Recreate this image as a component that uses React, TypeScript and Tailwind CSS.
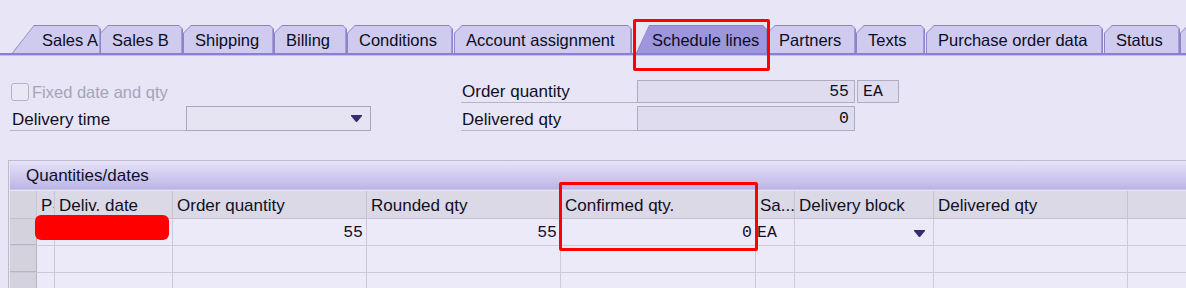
import React from "react";

type TabDef = { label: string; cls: string; kind: "first" | "normal" | "active" };

const tabs: TabDef[] = [
  { label: "Sales A", cls: "ml-[12px] w-[89px]", kind: "first" },
  { label: "Sales B", cls: "ml-[-1px] w-[83px]", kind: "normal" },
  { label: "Shipping", cls: "ml-[0px] w-[91px]", kind: "normal" },
  { label: "Billing", cls: "ml-[0px] w-[73px]", kind: "normal" },
  { label: "Conditions", cls: "ml-[0px] w-[106px]", kind: "normal" },
  { label: "Account assignment", cls: "ml-[1px] w-[178px]", kind: "normal" },
  { label: "Schedule lines", cls: "ml-[4px] w-[131px]", kind: "active" },
  { label: "Partners", cls: "ml-[0px] w-[89px]", kind: "normal" },
  { label: "Texts", cls: "ml-[0px] w-[69px]", kind: "normal" },
  { label: "Purchase order data", cls: "ml-[1px] w-[177px]", kind: "normal" },
  { label: "Status", cls: "ml-[1px] w-[76px]", kind: "normal" },
  { label: "", cls: "ml-[0px] w-[20px]", kind: "normal" },
];

function Tab({ t }: { t: TabDef }) {
  const outerClip =
    t.kind === "normal"
      ? "[clip-path:polygon(8px_0,calc(100%_-_4px)_0,100%_4px,100%_100%,0_100%,0_8px)]"
      : t.kind === "first"
      ? "[clip-path:polygon(22px_0,calc(100%_-_4px)_0,100%_4px,100%_100%,0_100%)]"
      : "[clip-path:polygon(13px_0,calc(100%_-_4px)_0,100%_4px,100%_100%,0_100%)]";
  const innerClip =
    t.kind === "normal"
      ? "[clip-path:polygon(7px_0,calc(100%_-_3px)_0,100%_3px,100%_100%,0_100%,0_7px)]"
      : t.kind === "first"
      ? "[clip-path:polygon(21px_0,calc(100%_-_3px)_0,100%_3px,100%_100%,0_100%)]"
      : "[clip-path:polygon(12px_0,calc(100%_-_3px)_0,100%_3px,100%_100%,0_100%)]";
  const bg = t.kind === "active" ? "bg-[#9d96dd]" : "bg-[#cfcbef]";
  const pad = t.kind === "first" ? "pl-[29px]" : t.kind === "active" ? "pl-[15px]" : "pl-[11px]";
  return (
    <div className={`${t.cls} h-[28px] shrink-0 bg-[#8c84c6] pt-[1px] pl-[1px] pr-[1px] ${outerClip}`}>
      <div
        className={`h-full ${bg} ${innerClip} ${pad} flex items-center pt-[1px] text-[16.5px] text-[#0c0c24] whitespace-nowrap border-r border-[#a29cd4]`}
      >
        {t.label}
      </div>
    </div>
  );
}

function DropArrow() {
  return (
    <svg width="11" height="7" viewBox="0 0 11 7">
      <polygon points="0,0 11,0 11,1 6,7 5,7 0,1" fill="#3a2a6e" />
    </svg>
  );
}

const cols = [
  { w: "w-[18px]", label: "P" },
  { w: "w-[118px]", label: "Deliv. date" },
  { w: "w-[194px]", label: "Order quantity" },
  { w: "w-[194px]", label: "Rounded qty" },
  { w: "w-[195px]", label: "Confirmed qty." },
  { w: "w-[39px]", label: "Sa..." },
  { w: "w-[139px]", label: "Delivery block" },
  { w: "w-[194px]", label: "Delivered qty" },
  { w: "w-[70px]", label: "" },
];

export default function App() {
  return (
    <div className="relative w-[1186px] h-[288px] overflow-hidden bg-[#e7e5f6] font-['Liberation_Sans',Arial,sans-serif] text-[#101024]">
      {/* tab strip */}
      <div className="flex items-end pt-[25px] border-b-2 border-[#8a7fd0]">
        {tabs.map((t, i) => (
          <Tab key={i} t={t} />
        ))}
      </div>
      <div className="h-px bg-[#c4bee8]" />

      {/* header fields */}
      <div className="flex mt-[24px]">
        <div className="ml-[10px] w-[361px] flex flex-col gap-[3px]">
          <div className="h-[23px] flex items-center">
            <div className="ml-[1px] w-[18px] h-[18px] rounded-[3px] border border-[#b4b2c6] bg-[#e9e8f4]" />
            <span className="ml-[3px] pt-[1px] text-[16.5px] text-[#a6a4b8]">Fixed date and qty</span>
          </div>
          <div className="h-[25px] flex">
            <div className="w-[176px] border-b border-[#b6b4c6] flex items-center pl-[2px] pt-[3px] text-[17px]">
              Delivery time
            </div>
            <div className="w-[185px] h-[25px] border border-[#a9a7b9] bg-[#e6e4f3] flex items-center justify-end pr-[8px]">
              <DropArrow />
            </div>
          </div>
        </div>

        <div className="ml-[90px] flex flex-col gap-[3px]">
          <div className="h-[23px] flex">
            <div className="w-[176px] border-b border-[#b6b4c6] flex items-center pl-[1px] pt-[2px] text-[17px]">
              Order quantity
            </div>
            <div className="w-[218px] h-[23px] border border-[#aeacbe] bg-[#dedcee] flex items-center justify-end pr-[5px] pt-[1px] font-['Liberation_Mono',monospace] text-[16.5px]">
              55
            </div>
            <div className="ml-[2px] w-[42px] h-[23px] border border-[#aeacbe] bg-[#dedcee] flex items-center pl-[5px] pt-[1px] font-['Liberation_Mono',monospace] text-[16.5px]">
              EA
            </div>
          </div>
          <div className="h-[25px] flex">
            <div className="w-[176px] border-b border-[#b6b4c6] flex items-center pl-[1px] pt-[3px] text-[17px]">
              Delivered qty
            </div>
            <div className="w-[218px] h-[25px] border border-[#aeacbe] bg-[#dedcee] flex items-center justify-end pr-[5px] pt-[1px] font-['Liberation_Mono',monospace] text-[16.5px]">
              0
            </div>
          </div>
        </div>
      </div>

      {/* group box */}
      <div className="mt-[29px] ml-[8px] border-l border-t border-[#bdbbd0] pl-[1px] pt-[1px]">
        <div className="h-[28px] flex items-center pl-[16px] pt-[1px] text-[17px] bg-gradient-to-b from-[#e4e1f7] to-[#bcb5e6] border-b border-[#c9c5e4]">
          Quantities/dates
        </div>

        {/* table header */}
        <div className="flex h-[28px] bg-[#dbd9e6] border-b border-[#c5c1d4] mt-[1px]">
          <div className="w-[27px] shrink-0 border-r border-[#c8c6d2] bg-[#d6d4de]" />
          {cols.map((c, i) => (
            <div
              key={i}
              className={`${c.w} shrink-0 border-r border-[#c8c4d6] flex items-center pl-[4px] pt-[2px] text-[17px] whitespace-nowrap overflow-hidden`}
            >
              {c.label === "P" ? (
                <>
                  P<span className="text-[#e07a2a] text-[10px] self-end mb-[6px]">.</span>
                </>
              ) : (
                c.label
              )}
            </div>
          ))}
        </div>

        {/* data rows */}
        {[0, 1, 2].map((r) => (
          <div key={r} className="flex h-[27px] border-b border-[#cdc8dc] bg-[#eceaf9]">
            <div className="w-[27px] shrink-0 bg-[#d4d2dc] border-r border-b border-[#b8b6c4]" />
            {cols.map((c, i) => (
              <div
                key={i}
                className={`${c.w} shrink-0 border-r border-[#cdc8dc] flex items-center pt-[2px] font-['Liberation_Mono',monospace] text-[16.5px] ${
                  i === 2 || i === 3 || i === 4 ? "justify-end pr-[3px]" : i === 6 ? "justify-end pr-[8px]" : "pl-[1px]"
                }`}
              >
                {r === 0 && (i === 2 || i === 3) && "55"}
                {r === 0 && i === 4 && "0"}
                {r === 0 && i === 5 && "EA"}
                {r === 0 && i === 6 && <DropArrow />}
              </div>
            ))}
          </div>
        ))}
      </div>

      {/* annotations */}
      <div className="absolute left-[633px] top-[19px] w-[137px] h-[52px] border-[3px] border-[#ff0000] rounded-[2px]" />
      <div className="absolute left-[559px] top-[182px] w-[199px] h-[69px] border-[3px] border-[#ff0000] rounded-[2px]" />
      <div className="absolute left-[35px] top-[215px] w-[134px] h-[25px] bg-[#ff0000] rounded-[6px]" />
    </div>
  );
}
